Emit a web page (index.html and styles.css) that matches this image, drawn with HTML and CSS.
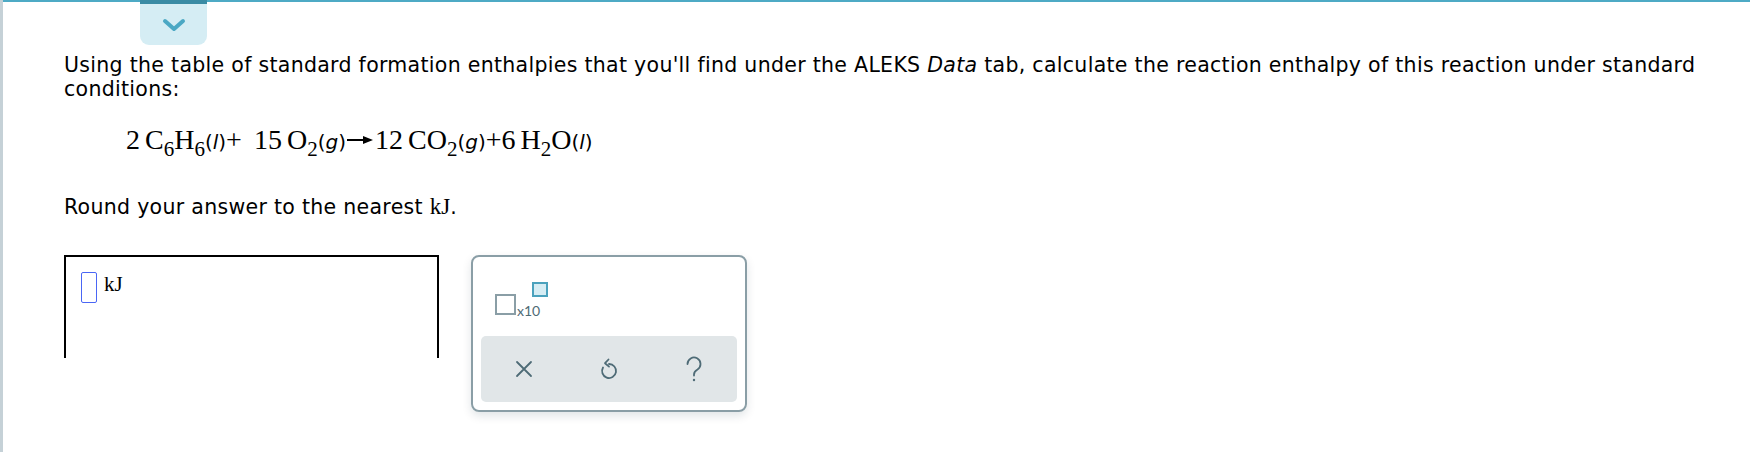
FILE: index.html
```html
<!DOCTYPE html>
<html>
<head>
<meta charset="utf-8">
<link rel="stylesheet" href="styles.css">
</head>
<body>
<div class="page">
  <div class="topbar"></div>
  <div class="tab">
    <svg class="chev" width="24" height="15" viewBox="0 0 24 15"><path d="M3 3 L12 11 L21 3" fill="none" stroke="#4ba8c4" stroke-width="4" stroke-linecap="round" stroke-linejoin="round"/></svg>
  </div>
  <div class="content">
    <p class="question"><span>Using the table of standard formation enthalpies that you'll find under the ALEKS <i>Data</i> tab, calculate the reaction enthalpy of this reaction under standard</span> <span>conditions:</span></p>
    <div class="equation">2<span class="sp"></span>C<sub>6</sub>H<sub>6</sub><span class="ph">(<i>l</i>)</span>+<span class="sp wide"></span>15<span class="sp"></span>O<sub>2</sub><span class="ph">(<i>g</i>)</span><svg class="arrow" width="26" height="10" viewBox="0 0 26 10"><path d="M0 5 H18" stroke="#000" stroke-width="2"/><path d="M16 1 L26 5 L16 9 Z" fill="#000"/></svg>12<span class="sp"></span>CO<sub>2</sub><span class="ph">(<i>g</i>)</span>+6<span class="sp"></span>H<sub>2</sub>O<span class="ph">(<i>l</i>)</span></div>
    <p class="round">Round your answer to the nearest <span class="unit">kJ</span>.</p>
    <div class="answer-row">
      <div class="answer">
        <span class="input"></span><span class="kj">kJ</span>
      </div>
      <div class="panel">
        <div class="sci">
          <span class="box"></span><span class="x10">x10</span><span class="sup"></span>
        </div>
        <div class="tools">
          <svg width="18" height="18" viewBox="0 0 18 18"><path d="M2 2 L16 16 M16 2 L2 16" stroke="#4e6b76" stroke-width="1.8" stroke-linecap="round"/></svg>
          <svg width="20" height="22" viewBox="0 0 20 22"><path d="M4 9.5 A7 7 0 1 0 10 6" fill="none" stroke="#4e6b76" stroke-width="1.8" stroke-linecap="round"/><path d="M9.5 1.5 L6 5.2 L10 8.6" fill="none" stroke="#4e6b76" stroke-width="1.8" stroke-linecap="round" stroke-linejoin="round"/></svg>
          <svg width="18" height="26" viewBox="0 0 18 26"><path d="M2.5 8 A6.5 6.5 0 1 1 12.5 13.5 Q9 15.5 9 18.5 V19.5" fill="none" stroke="#4e6b76" stroke-width="1.8" stroke-linecap="round"/><circle cx="9" cy="24" r="1.2" fill="#4e6b76"/></svg>
        </div>
      </div>
    </div>
  </div>
</div>
</body>
</html>
```
FILE: styles.css
```css
html, body {
  margin: 0;
  padding: 0;
  background: #fff;
}
.page {
  border-left: 3px solid #c5d1d7;
  min-height: 452px;
  box-sizing: border-box;
}
.topbar {
  height: 2px;
  background: #4eaac5;
}
.tab {
  margin-top: -2px;
  margin-left: 137px;
  width: 67px;
  height: 45px;
  box-sizing: border-box;
  background: #d5edf4;
  border-top: 4px solid #3a8ba4;
  border-radius: 0 0 9px 9px;
  display: flex;
  justify-content: center;
  padding-top: 14px;
}
.chev { display: block; }
.content {
  padding-left: 61px;
  padding-right: 40px;
  font-family: "DejaVu Sans", Verdana, sans-serif;
  color: #000;
}
.question {
  margin: 8px 0 0 0;
  font-size: 20.5px;
  letter-spacing: 0.3px;
  line-height: 24px;
}
.question i { font-style: italic; }
.equation {
  margin: 22px 0 0 62px;
  font-family: "Liberation Serif", "Times New Roman", serif;
  font-size: 28px;
  line-height: 34px;
  height: 34px;
  white-space: nowrap;
}
.equation sub {
  font-size: 21px;
  vertical-align: -7px;
  line-height: 0;
}
.equation .sp { display: inline-block; width: 5px; }
.equation .sp.wide { width: 12px; }
.equation .ph {
  font-family: "DejaVu Sans", Verdana, sans-serif;
  font-size: 20px;
  line-height: 0;
}
.equation .arrow { vertical-align: 4px; margin: 0 2px 0 1px; }
.round {
  margin: 39px 0 0 0;
  font-size: 20.5px;
  letter-spacing: 0.3px;
  line-height: 22px;
}
.unit {
  font-family: "Liberation Serif", "Times New Roman", serif;
  font-size: 23px;
  letter-spacing: 0;
}
.answer-row {
  display: flex;
  align-items: flex-start;
  margin-top: 37px;
  gap: 32px;
}
.answer {
  width: 375px;
  height: 103px;
  box-sizing: border-box;
  border: 2px solid #000;
  border-bottom: none;
  padding: 15px 0 0 15px;
  display: flex;
  align-items: flex-start;
}
.input {
  width: 16px;
  height: 31px;
  box-sizing: border-box;
  border: 1.5px solid #4a66f5;
  border-radius: 2px;
}
.kj {
  font-family: "Liberation Serif", "Times New Roman", serif;
  font-size: 21px;
  margin-left: 7px;
  line-height: 24px;
}
.panel {
  width: 276px;
  height: 157px;
  box-sizing: border-box;
  border: 2px solid #8a9ea6;
  border-radius: 8px;
  box-shadow: 0 4px 10px rgba(0, 40, 60, 0.12);
  padding: 0 8px 8px 8px;
  display: flex;
  flex-direction: column;
  justify-content: space-between;
}
.sci {
  margin: 34px 0 0 14px;
  height: 24px;
  display: flex;
  align-items: flex-end;
}
.box {
  width: 21px;
  height: 21px;
  box-sizing: border-box;
  border: 2px solid #8a9ea6;
  background: #fff;
}
.x10 {
  font-family: Lato, "Open Sans", sans-serif;
  font-size: 14px;
  color: #4e6b76;
  line-height: 12px;
  margin-left: 1px;
  margin-bottom: -2px;
}
.sup {
  width: 16px;
  height: 15px;
  box-sizing: border-box;
  border: 2px solid #4ba2bd;
  background: #d6edf4;
  margin-left: -8px;
  align-self: flex-start;
  margin-top: -9px;
}
.tools {
  height: 66px;
  background: #e1e6e8;
  border-radius: 5px;
  display: flex;
  align-items: center;
  justify-content: space-between;
  padding: 0 34px;
}
.tools svg { display: block; }
```
